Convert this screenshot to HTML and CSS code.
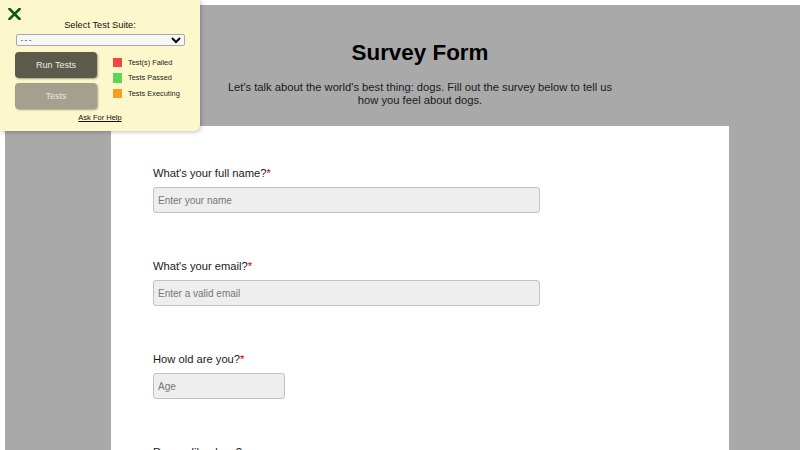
FILE: index.html
```html
<!DOCTYPE html>
<html lang="en">
  <head>
    <meta charset="UTF-8" />
    <title>Survey Form</title>
    <link rel="stylesheet" href="styles.css">
  </head>
  <body>
    <!-- Панель тестов поверх страницы -->
    <div class="test-panel">
      <svg class="test-close" width="13" height="12" viewBox="0 0 13 12">
        <path d="M1.5 1 L11.5 11 M11.5 1 L1.5 11" stroke="#0b5a12" stroke-width="2.6" stroke-linecap="square" />
      </svg>
      <div class="test-title">Select Test Suite:</div>
      <select class="test-select">
        <option>- - -</option>
      </select>
      <div class="test-body">
        <div class="test-buttons">
          <button class="btn-run">Run Tests</button>
          <button class="btn-tests">Tests</button>
        </div>
        <ul class="legend">
          <li><span class="swatch failed"></span>Test(s) Failed</li>
          <li><span class="swatch passed"></span>Tests Passed</li>
          <li><span class="swatch running"></span>Tests Executing</li>
        </ul>
      </div>
      <a class="test-help" href="#">Ask For Help</a>
    </div>

    <div class="page">
      <header class="intro">
        <h1 id="title">Survey Form</h1>
        <p id="description">
          Let's talk about the world's best thing: dogs. Fill out the survey below to tell us how you feel about dogs.
        </p>
      </header>

      <form id="survey-form">
        <div class="field">
          <label for="name">What's your full name?<span class="req">*</span></label>
          <input type="text" id="name" placeholder="Enter your name" />
        </div>
        <div class="field">
          <label for="email">What's your email?<span class="req">*</span></label>
          <input type="email" id="email" placeholder="Enter a valid email" />
        </div>
        <div class="field">
          <label for="number">How old are you?<span class="req">*</span></label>
          <input type="number" id="number" class="short" placeholder="Age" />
        </div>
        <div class="field">
          <label for="dogs">Do you like dogs?</label>
        </div>
      </form>
    </div>
  </body>
</html>
```

FILE: styles.css
```css
* {
  margin: 0;
  padding: 0;
  box-sizing: border-box;
}

body {
  font-family: "Liberation Sans", Arial, sans-serif;
  background: #fff;
  overflow: hidden;
}

/* Серый фон страницы */
.page {
  width: 830px;
  margin: 5px 0 0 5px;
  background: #a9a9a9;
  min-height: 460px;
}

.intro {
  text-align: center;
  padding-top: 35px;
}

.intro h1 {
  font-size: 22.4px;
  line-height: 26px;
  color: #000;
}

.intro p {
  max-width: 400px;
  margin: 15px auto 0;
  font-size: 11.2px;
  line-height: 13px;
  color: #1a1a1a;
}

/* Белая форма */
#survey-form {
  width: 618px;
  margin: 19px auto 0;
  background: #fff;
  padding: 41px 42px 0;
  min-height: 340px;
}

.field {
  margin-bottom: 47px;
}

.field label {
  display: block;
  font-size: 11.2px;
  line-height: 13px;
  color: #1a1a1a;
  margin-bottom: 7px;
}

.req {
  color: #c00;
}

.field input {
  display: block;
  width: 387px;
  height: 26px;
  padding: 0 4px;
  border: 1px solid #c2c2c2;
  border-radius: 3px;
  background: #eee;
  font-family: inherit;
  font-size: 10px;
  color: #333;
}

.field input::placeholder {
  color: #777;
}

.field input.short {
  width: 132px;
}

/* Панель тестов */
.test-panel {
  position: absolute;
  top: 0;
  left: 0;
  width: 200px;
  height: 131px;
  background: #fcf8cc;
  border-bottom-right-radius: 6px;
  box-shadow: 1px 1px 4px rgba(0, 0, 0, 0.25);
  font-family: "Liberation Sans", Arial, sans-serif;
  z-index: 10;
}

.test-close {
  position: absolute;
  top: 8px;
  left: 8px;
}

.test-title {
  text-align: center;
  font-size: 9.3px;
  padding-top: 19.5px;
  line-height: 11px;
  color: #111;
}

.test-select {
  display: block;
  width: 169px;
  height: 11.5px;
  margin: 3.5px 0 0 15.5px;
  font-size: 7px;
  border: 1px solid #a8a8a8;
  border-radius: 2px;
  background: #f7f7f5;
}

.test-body {
  display: flex;
  margin: 6px 0 0 15px;
}

.test-buttons {
  display: flex;
  flex-direction: column;
  gap: 5px;
}

.test-buttons button {
  width: 82px;
  height: 26px;
  border: none;
  border-radius: 4px;
  font-family: inherit;
  font-size: 9px;
  box-shadow: 1px 1px 2px rgba(0, 0, 0, 0.35);
}

.btn-run {
  background: #5c5a4b;
  color: #eeeee8;
}

.btn-tests {
  background: #a3a18e;
  color: #e6e6e0;
}

.legend {
  list-style: none;
  margin: 6.5px 0 0 16px;
}

.legend li {
  display: flex;
  align-items: center;
  font-size: 7.4px;
  color: #222;
  height: 9.3px;
  margin-bottom: 6px;
}

.swatch {
  width: 9.3px;
  height: 9.3px;
  margin-right: 5.7px;
}

.failed {
  background: #f0473f;
}

.passed {
  background: #5cd65a;
}

.running {
  background: #f89e1f;
}

.test-help {
  display: block;
  text-align: center;
  font-size: 7.5px;
  line-height: 9px;
  color: #111;
  margin-top: 4.8px;
  width: 200px;
}
```
